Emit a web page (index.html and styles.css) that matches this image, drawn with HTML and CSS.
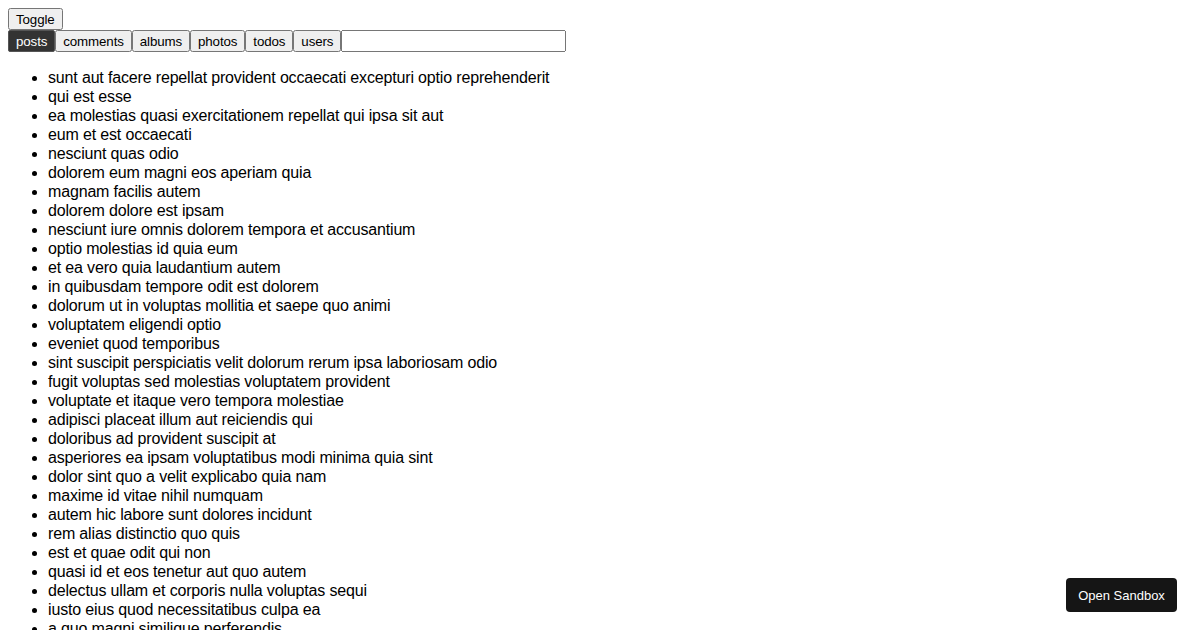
FILE: index.html
```html
<!DOCTYPE html>
<html>
<head>
<meta charset="utf-8">
<link rel="stylesheet" href="styles.css">
</head>
<body>
<div class="controls">
  <button class="btn toggle">Toggle</button>
  <div class="tabs">
    <button class="btn active">posts</button><button class="btn">comments</button><button class="btn">albums</button><button class="btn">photos</button><button class="btn">todos</button><button class="btn">users</button><input class="search" type="text">
  </div>
</div>
<ul class="list">
  <li>sunt aut facere repellat provident occaecati excepturi optio reprehenderit</li>
  <li>qui est esse</li>
  <li>ea molestias quasi exercitationem repellat qui ipsa sit aut</li>
  <li>eum et est occaecati</li>
  <li>nesciunt quas odio</li>
  <li>dolorem eum magni eos aperiam quia</li>
  <li>magnam facilis autem</li>
  <li>dolorem dolore est ipsam</li>
  <li>nesciunt iure omnis dolorem tempora et accusantium</li>
  <li>optio molestias id quia eum</li>
  <li>et ea vero quia laudantium autem</li>
  <li>in quibusdam tempore odit est dolorem</li>
  <li>dolorum ut in voluptas mollitia et saepe quo animi</li>
  <li>voluptatem eligendi optio</li>
  <li>eveniet quod temporibus</li>
  <li>sint suscipit perspiciatis velit dolorum rerum ipsa laboriosam odio</li>
  <li>fugit voluptas sed molestias voluptatem provident</li>
  <li>voluptate et itaque vero tempora molestiae</li>
  <li>adipisci placeat illum aut reiciendis qui</li>
  <li>doloribus ad provident suscipit at</li>
  <li>asperiores ea ipsam voluptatibus modi minima quia sint</li>
  <li>dolor sint quo a velit explicabo quia nam</li>
  <li>maxime id vitae nihil numquam</li>
  <li>autem hic labore sunt dolores incidunt</li>
  <li>rem alias distinctio quo quis</li>
  <li>est et quae odit qui non</li>
  <li>quasi id et eos tenetur aut quo autem</li>
  <li>delectus ullam et corporis nulla voluptas sequi</li>
  <li>iusto eius quod necessitatibus culpa ea</li>
  <li>a quo magni similique perferendis</li>
  <li>ullam ut quidem id aut vel consequuntur</li>
  <li>doloremque illum aliquid sunt</li>
</ul>
<button class="sandbox">Open Sandbox</button>
</body>
</html>
```
FILE: styles.css
```css
html, body {
  font-family: "Liberation Sans", Arial, sans-serif;
  font-size: 16px;
  color: #000;
  background: #fff;
}
body {
  margin: 8px;
}
.controls {
  display: flex;
  flex-direction: column;
  align-items: flex-start;
}
.btn {
  font-family: "Liberation Sans", Arial, sans-serif;
  font-size: 13.333px;
  letter-spacing: -0.12px;
  margin: 0;
  height: 22px;
  box-sizing: border-box;
}
.tabs {
  display: flex;
  align-items: stretch;
}
.btn.active {
  background: #333;
  color: #fff;
  border: 1px solid #555;
  border-radius: 2px;
  padding: 1px 7px;
}
.search {
  width: 225px;
  height: 22px;
  box-sizing: border-box;
  margin: 0;
  font-family: "Liberation Sans", Arial, sans-serif;
  font-size: 13.333px;
}
.list {
  margin: 16px 0;
  padding-left: 40px;
  line-height: 19px;
  letter-spacing: -0.16px;
}
.sandbox {
  position: fixed;
  right: 23px;
  bottom: 18px;
  width: 111px;
  height: 34px;
  background: #151515;
  color: #fff;
  border: none;
  border-radius: 4px;
  font-family: "Liberation Sans", Arial, sans-serif;
  font-size: 13px;
  padding: 0;
}
```
